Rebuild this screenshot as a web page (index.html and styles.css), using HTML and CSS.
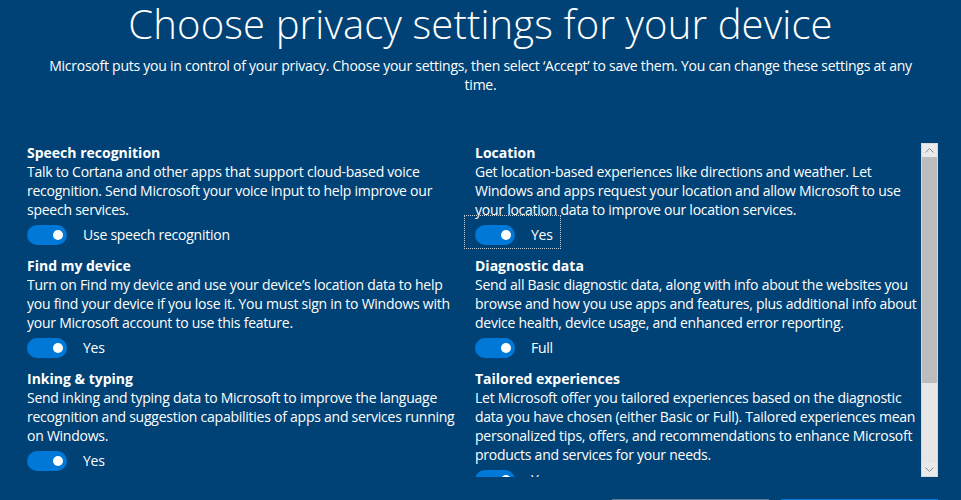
FILE: index.html
```html
<!DOCTYPE html>
<html lang="en">
<head>
  <meta charset="UTF-8">
  <meta name="viewport" content="width=device-width, initial-scale=1.0">
  <title>Privacy settings</title>
  <link rel="stylesheet" href="styles.css">
</head>
<body>
  <div class="oobe-page">
    <h1 class="page-title">Choose privacy settings for your device</h1>
    <p class="page-intro">Microsoft puts you in control of your privacy. Choose your settings, then select ‘Accept’ to save them. You can change these settings at any time.</p>

    <div class="settings-frame">
      <div class="settings-scroll">
        <div class="settings-col col-left">
          <section class="setting">
            <h2>Speech recognition</h2>
            <p>Talk to Cortana and other apps that support cloud-based voice recognition. Send Microsoft your voice input to help improve our speech services.</p>
            <div class="toggle-row">
              <span class="toggle"></span>
              <span class="toggle-label">Use speech recognition</span>
            </div>
          </section>

          <section class="setting">
            <h2>Find my device</h2>
            <p>Turn on Find my device and use your device’s location data to help you find your device if you lose it. You must sign in to Windows with your Microsoft account to use this feature.</p>
            <div class="toggle-row">
              <span class="toggle"></span>
              <span class="toggle-label">Yes</span>
            </div>
          </section>

          <section class="setting">
            <h2>Inking &amp; typing</h2>
            <p>Send inking and typing data to Microsoft to improve the language recognition and suggestion capabilities of apps and services running on Windows.</p>
            <div class="toggle-row">
              <span class="toggle"></span>
              <span class="toggle-label">Yes</span>
            </div>
          </section>
        </div>

        <div class="settings-col col-right">
          <section class="setting">
            <h2>Location</h2>
            <p>Get location-based experiences like directions and weather. Let Windows and apps request your location and allow Microsoft to use your location data to improve our location services.</p>
            <div class="toggle-row focused">
              <span class="toggle"></span>
              <span class="toggle-label">Yes</span>
            </div>
          </section>

          <section class="setting">
            <h2>Diagnostic data</h2>
            <p>Send all Basic diagnostic data, along with info about the websites you browse and how you use apps and features, plus additional info about device health, device usage, and enhanced error reporting.</p>
            <div class="toggle-row">
              <span class="toggle"></span>
              <span class="toggle-label">Full</span>
            </div>
          </section>

          <section class="setting">
            <h2>Tailored experiences</h2>
            <p>Let Microsoft offer you tailored experiences based on the diagnostic data you have chosen (either Basic or Full). Tailored experiences mean personalized tips, offers, and recommendations to enhance Microsoft products and services for your needs.</p>
            <div class="toggle-row">
              <span class="toggle"></span>
              <span class="toggle-label">Yes</span>
            </div>
          </section>
        </div>
      </div>

      <div class="scrollbar">
        <span class="scroll-arrow up"><svg width="9" height="5" viewBox="0 0 9 5"><path d="M0.5 4.5 L4.5 0.5 L8.5 4.5" fill="none" stroke="#8a8a8a" stroke-width="1"/></svg></span>
        <span class="scroll-thumb"></span>
        <span class="scroll-track"></span>
        <span class="scroll-arrow down"><svg width="9" height="5" viewBox="0 0 9 5"><path d="M0.5 0.5 L4.5 4.5 L8.5 0.5" fill="none" stroke="#8a8a8a" stroke-width="1"/></svg></span>
      </div>
    </div>

    <div class="page-actions">
      <button class="btn btn-secondary">Learn more</button>
      <button class="btn btn-primary">Accept</button>
    </div>
  </div>
</body>
</html>
```

FILE: styles.css
```css
body {
  margin: 0;
  height: 500px;
  overflow: hidden;
  background-color: #004275;
  color: #fff;
  font-family: 'Open Sans', 'Noto Sans', sans-serif;
}

.oobe-page {
  display: flex;
  flex-direction: column;
}

.page-title {
  margin: 0;
  padding-top: 2px;
  text-align: center;
  font-size: 40px;
  font-weight: 300;
  line-height: 44px;
  letter-spacing: 0.14px;
}

.page-intro {
  margin: 10px 0 0;
  padding: 0 40px;
  text-align: center;
  font-size: 14px;
  line-height: 19px;
  letter-spacing: -0.25px;
}

.settings-frame {
  display: flex;
  height: 336px;
  margin-top: 47px;
  padding-left: 27px;
}

.settings-scroll {
  flex: 1;
  display: grid;
  grid-template-columns: 448px 1fr;
  overflow: hidden;
  padding-top: 2px;
}

.setting {
  margin-bottom: 6px;
}

.setting h2 {
  margin: 0;
  font-size: 14px;
  font-weight: 700;
  line-height: 19px;
}

.setting p {
  margin: 0;
  font-size: 14px;
  line-height: 19px;
  letter-spacing: -0.25px;
}

.col-left p {
  max-width: 430px;
}

.col-right p {
  max-width: 446px;
}

/* toggle rows carry a border so the focused one can show its dotted ring */
.toggle-row {
  display: inline-flex;
  align-items: center;
  margin: -4px 0 0 -11px;
  padding: 9px 7px 3px 10px;
  border: 1px dotted transparent;
}

.toggle-row.focused {
  border-color: #c8d0d8;
}

.toggle {
  position: relative;
  width: 40px;
  height: 20px;
  border-radius: 10px;
  background: #0078d7;
}

.toggle::after {
  content: "";
  position: absolute;
  top: 5px;
  right: 4px;
  width: 10px;
  height: 10px;
  border-radius: 50%;
  background: #fff;
}

.toggle-label {
  margin-left: 16px;
  font-size: 14px;
  line-height: 20px;
  letter-spacing: -0.25px;
}

.scrollbar {
  display: flex;
  flex-direction: column;
  width: 15px;
  margin: 2px 23px 0 0;
  border: 1px solid #d8d8d8;
  background: #e8e8e8;
}

.scroll-arrow {
  display: flex;
  align-items: center;
  justify-content: center;
  height: 13px;
  background: #eaeaea;
}

.scroll-thumb {
  height: 226px;
  background: #bcbcbc;
}

.scroll-track {
  flex: 1;
  background: #e6e6e6;
}

.page-actions {
  display: flex;
  justify-content: flex-end;
  gap: 12px;
  margin-top: 22px;
  padding-right: 23px;
}

.btn {
  width: 157px;
  height: 32px;
  border: none;
  color: #fff;
  font-family: inherit;
  font-size: 15px;
}

.btn-secondary {
  background: #5d7d9d;
}

.btn-primary {
  background: #0078d7;
}
```
